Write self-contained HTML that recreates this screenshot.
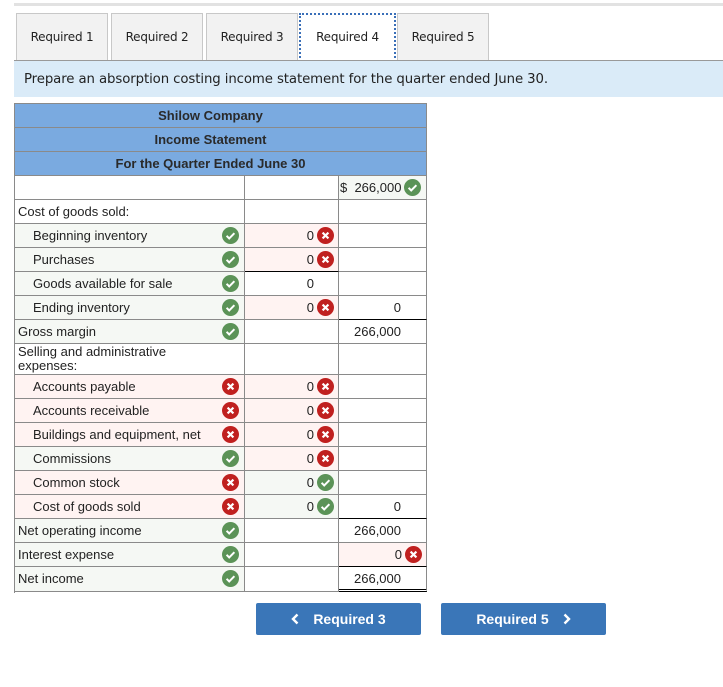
<!DOCTYPE html>
<html><head><meta charset="utf-8"><style>
*{box-sizing:border-box;margin:0;padding:0}
body{width:723px;height:687px;background:#fff;position:relative;font-family:"Liberation Sans",Arial,sans-serif;font-size:13px;color:#222;overflow:hidden}
.a{position:absolute}
.tab{position:absolute;top:13px;height:48px;background:#f2f2f2;border:1px solid #c8c8c8;border-bottom:none;font-family:"DejaVu Sans",Verdana,sans-serif;font-size:12px;letter-spacing:-0.2px;text-align:center;line-height:46px;color:#222}
.c{position:absolute;border-right:1px solid #8a8a8a;border-bottom:1px solid #8a8a8a}
.ic{position:absolute;width:17px;height:17px}
.v{position:absolute;text-align:right}
.hd{background:#7aaae0;text-align:center;font-weight:bold;line-height:23px;color:#2a2a2a;padding-right:20px}
.btn{position:absolute;top:603px;height:32px;background:#3a76b8;border-radius:2px;color:#fff;font-weight:bold;font-size:14px;line-height:32px;text-align:center}
.btn svg{vertical-align:-1px}
</style></head><body>
<div class="a" style="left:14px;top:3px;width:709px;height:3px;background:#e2e2e2"></div>
<div class="tab" style="left:16px;width:92px">Required 1</div>
<div class="tab" style="left:111px;width:92px">Required 2</div>
<div class="tab" style="left:206px;width:92px">Required 3</div>
<div class="tab" style="left:299px;width:97px;background:#fff;border:2px dotted #3a6fb8;height:49px;line-height:45px">Required 4</div>
<div class="tab" style="left:397px;width:92px">Required 5</div>
<div class="a" style="left:14px;top:60px;width:709px;height:37px;background:#daebf8;border-top:1px solid #999;font-family:'DejaVu Sans',Verdana,sans-serif;font-size:13.3px;letter-spacing:-0.1px;line-height:38px;padding-left:10px;color:#222;white-space:nowrap">Prepare an absorption costing income statement for the quarter ended June 30.</div>

<div class="a" style="left:14px;top:103px;width:413px;height:490px;border:1px solid #8a8a8a;border-right:none;border-bottom:none"></div>
<div class="c hd" style="left:15px;top:104px;width:412px;height:24px">Shilow Company</div>
<div class="c hd" style="left:15px;top:128px;width:412px;height:24px">Income Statement</div>
<div class="c hd" style="left:15px;top:152px;width:412px;height:24px">For the Quarter Ended June 30</div>

<div class="c" style="left:15px;top:176px;width:230px;height:24px"></div>
<div class="c" style="left:245px;top:176px;width:94px;height:24px"></div>
<div class="c" style="left:339px;top:176px;width:88px;height:24px;background:#f5f8f4"><span class="v" style="left:1px;top:4px">$&nbsp;&nbsp;266,000</span><svg class="ic" style="left:65px;top:3px" viewBox="0 0 17 17"><circle cx="8.5" cy="8.5" r="8.5" fill="#5b9357"/><path d="M4.6 8.8l2.6 2.6 5.2-5.2" stroke="#fff" stroke-width="2" fill="none"/></svg></div>

<div class="c" style="left:15px;top:200px;width:230px;height:24px"><span class="a" style="left:3px;top:4px">Cost of goods sold:</span></div>
<div class="c" style="left:245px;top:200px;width:94px;height:24px"></div>
<div class="c" style="left:339px;top:200px;width:88px;height:24px"></div>

<div id="rows"></div>
<script>
var CK='<svg class="ic" viewBox="0 0 17 17" style="LEFT;top:3px"><circle cx="8.5" cy="8.5" r="8.5" fill="#5b9357"/><path d="M4.6 8.8l2.6 2.6 5.2-5.2" stroke="#fff" stroke-width="2" fill="none"/></svg>';
var XX='<svg class="ic" viewBox="0 0 17 17" style="LEFT;top:3px"><circle cx="8.5" cy="8.5" r="8.5" fill="#c0201f"/><path d="M5.6 5.6l5.8 5.8M11.4 5.6l-5.8 5.8" stroke="#fff" stroke-width="2.2" fill="none"/></svg>';
function ic(t,l){return t=='c'?CK.replace('LEFT','left:'+l+'px'):XX.replace('LEFT','left:'+l+'px');}
var G='#f5f8f4',P='#fff3f2',W='#fff';
var R=[
[224,24,'Beginning inventory',1,'c','0','x','','',0,0],
[248,24,'Purchases',1,'c','0','x','','',1,0],
[272,24,'Goods available for sale',1,'c','0','','','',0,0],
[296,24,'Ending inventory',1,'c','0','x','0','',0,1],
[320,24,'Gross margin',0,'c','','','266,000','',0,0],
[344,31,'Selling and administrative<br>expenses:',0,'','','','','',0,0],
[375,24,'Accounts payable',1,'x','0','x','','',0,0],
[399,24,'Accounts receivable',1,'x','0','x','','',0,0],
[423,24,'Buildings and equipment, net',1,'x','0','x','','',0,0],
[447,24,'Commissions',1,'c','0','x','','',0,0],
[471,24,'Common stock',1,'x','0','c','','',0,0],
[495,24,'Cost of goods sold',1,'x','0','c','0','',0,1],
[519,24,'Net operating income',0,'c','','','266,000','',0,0],
[543,24,'Interest expense',0,'c','','','0','x',0,1],
[567,25,'Net income',0,'c','','','266,000','',0,2]
];
var h='';
R.forEach(function(r){
 var t=r[0],H=r[1];
 var lb=r[4]=='c'?G:(r[4]=='x'?P:W);
 var ls=r[2].indexOf('<br>')>=0?'top:1px;line-height:14px':'top:4px';
 h+='<div class="c" style="left:15px;top:'+t+'px;width:230px;height:'+H+'px;background:'+lb+'"><span class="a" style="left:'+(r[3]?18:3)+'px;'+ls+'">'+r[2]+'</span>'+(r[4]?ic(r[4],207):'')+'</div>';
 var mb=r[6]=='x'?P:(r[6]=='c'?G:W);
 h+='<div class="c" style="left:245px;top:'+t+'px;width:94px;height:'+H+'px;background:'+mb+(r[9]?';border-bottom:1px solid #000':'')+'">'+(r[5]?'<span class="v" style="right:24px;top:4px">'+r[5]+'</span>':'')+(r[6]?ic(r[6],72):'')+'</div>';
 var rb=r[8]=='x'?P:W;
 var bb=r[10]==1?';border-bottom:1px solid #000':(r[10]==2?';border-bottom:3px double #000':'');
 h+='<div class="c" style="left:339px;top:'+t+'px;width:88px;height:'+H+'px;background:'+rb+bb+'">'+(r[7]?'<span class="v" style="right:'+(r[8]?24:25)+'px;top:4px">'+r[7]+'</span>':'')+(r[8]?ic(r[8],66):'')+'</div>';
});
document.getElementById('rows').innerHTML=h;
</script>

<div class="btn" style="left:256px;width:165px"><svg width="8" height="12" viewBox="0 0 8 12" style="margin-right:14px"><path d="M6.5 1.5L2 6l4.5 4.5" stroke="#fff" stroke-width="2.4" fill="none"/></svg>Required 3</div>
<div class="btn" style="left:441px;width:165px">Required 5<svg width="8" height="12" viewBox="0 0 8 12" style="margin-left:14px"><path d="M1.5 1.5L6 6l-4.5 4.5" stroke="#fff" stroke-width="2.4" fill="none"/></svg></div>
</body></html>
